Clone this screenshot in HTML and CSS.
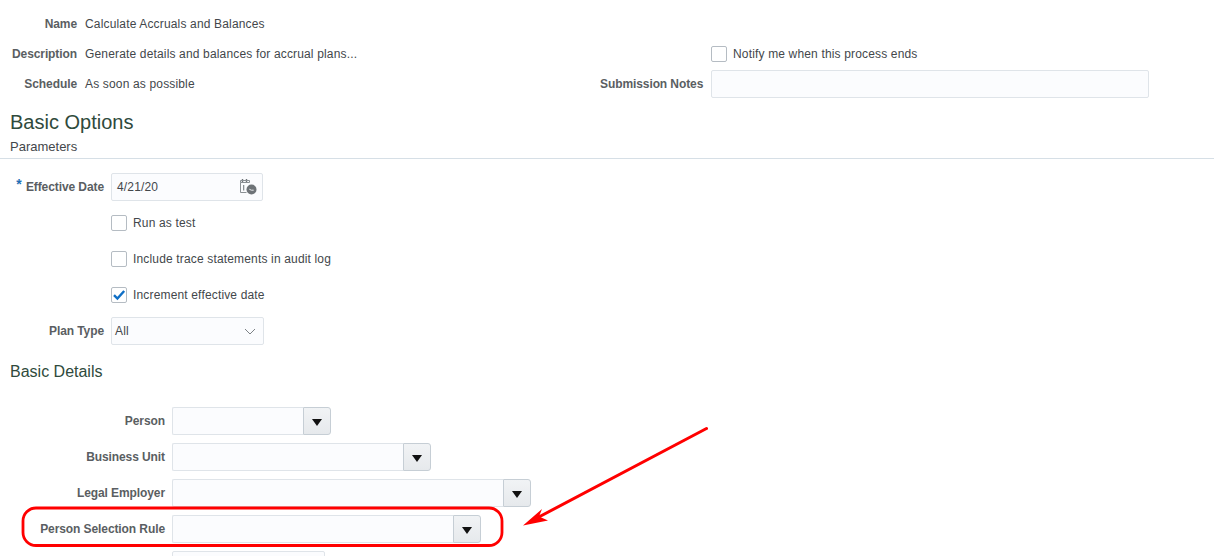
FILE: index.html
```html
<!DOCTYPE html>
<html lang="en">
<head>
<meta charset="utf-8">
<title>Calculate Accruals and Balances</title>
<link rel="stylesheet" href="styles.css">
</head>
<body>
<main class="page">
  <section class="summary">
    <div class="summary-col">
      <div class="sum-row"><span class="label sum-label">Name</span><span class="value">Calculate Accruals and Balances</span></div>
      <div class="sum-row"><span class="label sum-label">Description</span><span class="value">Generate details and balances for accrual plans...</span></div>
      <div class="sum-row"><span class="label sum-label">Schedule</span><span class="value">As soon as possible</span></div>
    </div>
    <div class="summary-col summary-right">
      <div class="sum-row"></div>
      <div class="sum-row"><span class="note-label"></span><span class="check"></span><span class="value check-text">Notify me when this process ends</span></div>
      <div class="sum-row"><span class="label note-label">Submission Notes</span><span class="field notes"></span></div>
    </div>
  </section>

  <h1 class="title">Basic Options</h1>
  <div class="subtitle">Parameters</div>

  <section class="params">
    <div class="row">
      <span class="label p-label"><span class="req">*</span> Effective Date</span>
      <span class="field date"><span class="value">4/21/20</span>
        <svg class="cal" width="17" height="16" viewBox="0 0 17 16"><path d="M2.500 0v3M6.500 0v3" stroke="#6f7478" stroke-width="1.400" fill="none"/><path d="M.5 1.500h9v2h-9zM.5 3.500v10h6" stroke="#8b9094" fill="none"/><path d="M3 6h1.300v5.500H3z" fill="#8b9094"/><circle cx="11.500" cy="10.500" r="5" fill="#6e7377"/><path d="M9.300 10.200l2 1h2.400" stroke="#e8eaec" stroke-width="1" fill="none"/></svg>
      </span>
    </div>
    <div class="row"><span class="p-label"></span><span class="check"></span><span class="value check-text">Run as test</span></div>
    <div class="row"><span class="p-label"></span><span class="check"></span><span class="value check-text">Include trace statements in audit log</span></div>
    <div class="row"><span class="p-label"></span><span class="check"><svg width="14" height="14" viewBox="0 0 14 14"><path d="M2 7.200l3.400 3.400L12.200 3" stroke="#0f6fc6" stroke-width="2.400" fill="none"/></svg></span><span class="value check-text">Increment effective date</span></div>
    <div class="row">
      <span class="label p-label">Plan Type</span>
      <span class="field plan"><span class="value">All</span>
        <svg width="12" height="7" viewBox="0 0 12 7"><path d="M1 1l5 5 5-5" stroke="#7d8286" stroke-width="1" fill="none"/></svg>
      </span>
    </div>
  </section>

  <h2 class="section">Basic Details</h2>

  <section class="details">
    <div class="row"><span class="label d-label">Person</span><span class="combo w-person"><span class="combo-input"></span><span class="combo-btn"><i class="tri"></i></span></span></div>
    <div class="row"><span class="label d-label">Business Unit</span><span class="combo w-unit"><span class="combo-input"></span><span class="combo-btn"><i class="tri"></i></span></span></div>
    <div class="row"><span class="label d-label">Legal Employer</span><span class="combo w-legal"><span class="combo-input"></span><span class="combo-btn"><i class="tri"></i></span></span></div>
    <div class="row"><span class="label d-label">Person Selection Rule</span><span class="combo w-rule"><span class="combo-input"></span><span class="combo-btn"><i class="tri"></i></span></span></div>
    <div class="row"><span class="d-label"></span><span class="field last"></span></div>
  </section>
</main>

<svg class="markup" width="1214" height="556" viewBox="0 0 1214 556">
  <rect x="23" y="508" width="479" height="37.500" rx="13" fill="none" stroke="#ff0000" stroke-width="2.800"/>
  <path d="M706.500 428.500L536 518.500" stroke="#ff0000" stroke-width="3" stroke-linecap="round" fill="none"/>
  <path d="M523 525.500L542 509L539 516.500L548 520.500Z" fill="#ff0000"/>
</svg>
</body>
</html>
```
FILE: styles.css
```css
* { box-sizing: border-box; }

html, body {
  margin: 0;
  height: 556px;
  overflow: hidden;
  background: #fff;
}

body {
  position: relative;
  font-family: "Liberation Sans", Arial, sans-serif;
  font-size: 12px;
  color: #3f4347;
}

.page {
  padding: 9px 0 0 0;
}

.summary {
  display: flex;
}

.summary-col {
  width: 600px;
}

.summary-right {
  flex: 1;
}

.sum-row {
  display: flex;
  align-items: center;
  height: 30px;
}

.label {
  font-weight: bold;
  color: #5a5e62;
  letter-spacing: -0.09px;
  text-align: right;
  white-space: nowrap;
}

.value {
  color: #43474b;
  letter-spacing: 0.16px;
  white-space: nowrap;
}

.sum-label {
  width: 77px;
  margin-right: 8px;
}

.note-label {
  width: 103px;
  margin-right: 8px;
  flex: none;
}

.field {
  display: flex;
  align-items: center;
  justify-content: space-between;
  height: 28px;
  background: #fbfcfe;
  border: 1px solid #dfe4e9;
  border-radius: 2px;
}

.notes {
  width: 438px;
}

.check {
  display: flex;
  align-items: center;
  justify-content: center;
  width: 16px;
  height: 16px;
  flex: none;
  background: #fff;
  border: 1px solid #b5bcc3;
  border-radius: 2px;
}

.check-text {
  margin-left: 6px;
}

.title {
  margin: 0;
  padding: 11px 0 0 10px;
  font-size: 20px;
  line-height: 24px;
  font-weight: normal;
  color: #2f4a3c;
}

.subtitle {
  margin-top: 5px;
  padding: 0 0 4px 10px;
  height: 20px;
  font-size: 13px;
  line-height: 15px;
  color: #43474b;
  border-bottom: 1px solid #d6dfe6;
}

.params {
  padding-top: 10px;
}

.row {
  display: flex;
  align-items: center;
  height: 36px;
}

.p-label {
  width: 104px;
  margin-right: 7px;
  flex: none;
}

.req {
  margin-right: 1px;
  color: #1f6fb5;
  font-size: 14px;
  line-height: 0;
  vertical-align: 2px;
}

.date {
  width: 152px;
  padding: 0 5px 0 5px;
}

.plan {
  width: 153px;
  padding: 0 7px 0 3px;
}

.cal {
  flex: none;
}

.section {
  margin: 0;
  padding: 13px 0 0 10px;
  font-size: 16px;
  line-height: 20px;
  font-weight: normal;
  color: #2f4a3c;
}

.details {
  padding-top: 21px;
}

.d-label {
  width: 165px;
  margin-right: 7px;
  flex: none;
}

.combo {
  display: flex;
  height: 28px;
}

.w-person { width: 159px; }
.w-unit { width: 259px; }
.w-legal { width: 359px; }
.w-rule { width: 309px; }

.combo-input {
  flex: 1;
  background: #fbfcfe;
  border: 1px solid #dfe4e9;
  border-right: 0;
  border-radius: 2px 0 0 2px;
}

.combo-btn {
  display: flex;
  align-items: center;
  justify-content: center;
  width: 28px;
  background: linear-gradient(#f1f3f5, #e6e9ec);
  border: 1px solid #c6ced5;
  border-radius: 0 3px 3px 0;
}

.tri {
  width: 0;
  height: 0;
  margin: 2px 1px 0 0;
  border-left: 5px solid transparent;
  border-right: 5px solid transparent;
  border-top: 7px solid #111;
}

.last {
  width: 153px;
}

.markup {
  position: absolute;
  left: 0;
  top: 0;
  pointer-events: none;
}
```
